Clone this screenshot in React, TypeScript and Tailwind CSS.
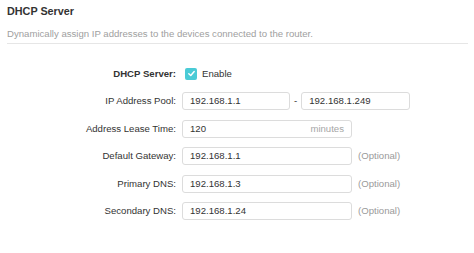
import React from 'react'

function Field({ value, suffix, width = 'w-[170px]' }: { value: string; suffix?: string; width?: string }) {
  return (
    <div
      className={`${width} h-[18px] flex items-center justify-between rounded-[3px] border border-[#dcdcdc] bg-white pl-[7px] pr-[7px] text-[9.6px] text-[#333]`}
    >
      <span>{value}</span>
      {suffix && <span className="text-[#a6a6a6]">{suffix}</span>}
    </div>
  )
}

function Row({ label, bold, children }: { label: string; bold?: boolean; children: React.ReactNode }) {
  return (
    <div className="flex h-[27.5px] items-center">
      <div className={`w-[176px] text-right text-[9.6px] text-[#333] ${bold ? 'font-bold' : ''}`}>{label}</div>
      <div className="ml-[6px] flex items-center">{children}</div>
    </div>
  )
}

const Optional = () => <span className="ml-[6px] text-[9.6px] text-[#9a9a9a]">(Optional)</span>

export default function App() {
  return (
    <div className="h-[253px] w-[474px] bg-white" style={{ fontFamily: '"Liberation Sans", Arial, sans-serif' }}>
      <div className="mx-[7px] mr-[6px] pt-[4px]">
        <h2 className="h-[14px] text-[10.8px] font-bold leading-[14px] text-[#333]">DHCP Server</h2>
        <p className="mt-[9px] border-b border-[#e6e6e6] pb-[3px] text-[9.6px] leading-[13px] text-[#a0a0a0]">
          Dynamically assign IP addresses to the devices connected to the router.
        </p>
      </div>

      <div className="mt-[16px]">
        <Row label="DHCP Server:" bold>
          <label className="ml-[3px] flex items-center gap-[5px] text-[9.6px] text-[#333]">
            <span className="flex h-[12px] w-[12px] items-center justify-center rounded-[2px] bg-[#4acbd6]">
              <svg width="9" height="9" viewBox="0 0 10 10" fill="none">
                <path d="M2 5.2 L4.2 7.2 L8 2.8" stroke="white" strokeWidth="1.6" strokeLinecap="round" strokeLinejoin="round" />
              </svg>
            </span>
            Enable
          </label>
        </Row>
        <Row label="IP Address Pool:">
          <Field value="192.168.1.1" width="w-[108px]" />
          <span className="mx-[4px] text-[9.6px] text-[#333]">-</span>
          <Field value="192.168.1.249" width="w-[109px]" />
        </Row>
        <Row label="Address Lease Time:">
          <Field value="120" suffix="minutes" />
        </Row>
        <Row label="Default Gateway:">
          <Field value="192.168.1.1" />
          <Optional />
        </Row>
        <Row label="Primary DNS:">
          <Field value="192.168.1.3" />
          <Optional />
        </Row>
        <Row label="Secondary DNS:">
          <Field value="192.168.1.24" />
          <Optional />
        </Row>
      </div>
    </div>
  )
}
